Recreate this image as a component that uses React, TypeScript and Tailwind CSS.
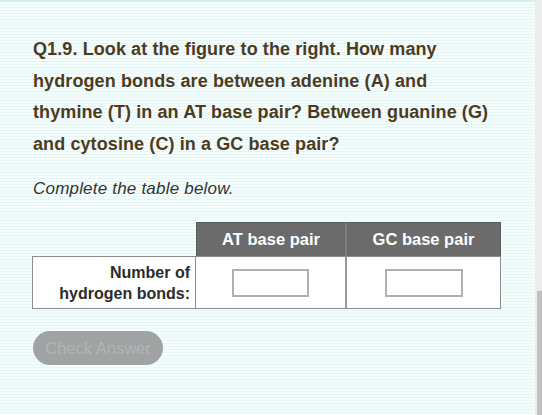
import React from "react";

export default function App() {
  return (
    <div className="flex w-[542px] h-[415px] overflow-hidden">
      <div
        className="flex-1 h-full border-t-2 border-[#d6eeee] bg-[repeating-linear-gradient(to_bottom,#f5fcfc_0px,#f5fcfc_2px,#e4f6f6_2px,#e4f6f6_3px)] pl-[33px] pt-[32px]"
        style={{ fontFamily: '"Liberation Sans", Arial, sans-serif' }}
      >
        <p className="w-[490px] text-[18px] font-bold leading-[31.5px] tracking-[0.1px] text-[#4d3b1e]">
          Q1.9. Look at the figure to the right. How many
          <br />
          hydrogen bonds are between adenine (A) and
          <br />
          thymine (T) in an AT base pair? Between guanine (G)
          <br />
          and cytosine (C) in a GC base pair?
        </p>
        <p className="mt-[19px] text-[17px] italic tracking-[0.2px] text-[#333333] leading-[20px]">Complete the table below.</p>
        <div className="mt-[23px] flex flex-col w-[469px] -ml-[1px]">
          <div className="flex h-[34px]">
            <div className="w-[164px]" />
            <div className="flex flex-1 bg-[#6b6b6b] border border-[#5a5a5a] border-b-0">
              <div className="w-[150px] flex items-center justify-center border-r-2 border-[#7d7d7d] text-white font-bold text-[16.5px]">AT base pair</div>
              <div className="flex-1 flex items-center justify-center text-white font-bold text-[16.5px]">GC base pair</div>
            </div>
          </div>
          <div className="flex h-[53px] bg-white border border-[#8c8c8c]">
            <div className="w-[163px] border-r border-[#8c8c8c] flex flex-col justify-center items-end pr-[5px] text-[16px] font-bold leading-[21px] text-[#2b2b2b] text-right">
              <span>Number of</span>
              <span>hydrogen bonds:</span>
            </div>
            <div className="w-[151px] border-r-2 border-[#9a9a9a] flex items-center justify-center">
              <div className="w-[77px] h-[28px] border-2 border-[#b0b0b0] bg-white" />
            </div>
            <div className="flex-1 flex items-center justify-center">
              <div className="w-[78px] h-[28px] border-2 border-[#b0b0b0] bg-white" />
            </div>
          </div>
        </div>
        <div className="mt-[22px] w-[130px] h-[34px] rounded-full bg-[#a0a3a3] flex items-center justify-center text-[16.5px] text-[#b3b5b5]">
          Check Answer
        </div>
      </div>
      <div className="w-[7px] h-full bg-[#ececec] flex flex-col">
        <div className="h-[291px]" />
        <div className="flex-1 ml-[2px] bg-[#c1c1c1]" />
      </div>
    </div>
  );
}
